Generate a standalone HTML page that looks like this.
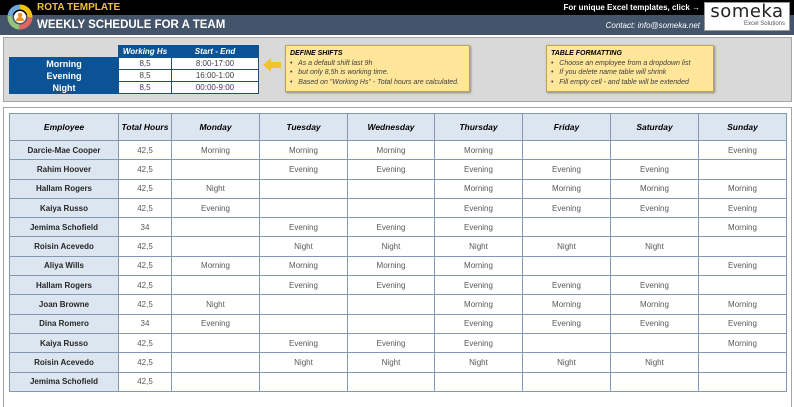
<!DOCTYPE html>
<html><head><meta charset="utf-8"><style>
*{margin:0;padding:0;box-sizing:border-box}
body{width:794px;height:407px;overflow:hidden;background:#fff;font-family:"Liberation Sans",Arial,sans-serif;position:relative}
.abs{position:absolute}
#top1{left:0;top:0;width:794px;height:15px;background:#000}
#top2{left:0;top:15px;width:794px;height:20px;background:#44546a}
#panel{left:3px;top:37px;width:789px;height:65px;background:#d9d9d9;border:1px solid #a6a6a6}
#tpanel{left:3px;top:107px;width:789px;height:300px;background:#fff;border:1px solid #a6a6a6;border-bottom:none}
table{border-collapse:collapse;table-layout:fixed}
#shift{left:9px;top:45px;font-size:8px}
#shift td{height:12px;text-align:center;border:1px solid #1f4e79;color:#404040;background:#fff}
#shift td.l{background:#0b5394;color:#fff;font-weight:bold;font-size:9px;border-color:#0b5394}
#shift td.h{background:#0b5394;color:#fff;font-weight:bold;font-style:italic;border-color:#0b5394}
.note{background:#ffe699;border:1px solid #bfa54f;box-shadow:1px 1px 2px #888;font-size:7px;font-style:italic;color:#404040;padding:3px 4px;line-height:9.6px}
.note b{color:#000;display:block}
#main{left:9px;top:113px;font-size:8px}
#main td{border:1px solid #8497b0;text-align:center;color:#595959;height:19.3px}
#main tr.hd td{height:27px;background:#dce6f1;font-weight:bold;font-style:italic;color:#000;font-size:8.5px}
#main td.n{background:#dce6f1;font-weight:bold;color:#262626}
</style></head><body>
<div id="top1" class="abs"></div>
<div id="top2" class="abs"></div>
<svg class="abs" style="left:6px;top:3px" width="28" height="28" viewBox="0 0 28 28">
<circle cx="14" cy="14" r="10" fill="none" stroke="#f4c20d" stroke-width="5" stroke-dasharray="16 63" transform="rotate(-90 14 14)"/>
<circle cx="14" cy="14" r="10" fill="none" stroke="#e06666" stroke-width="5" stroke-dasharray="16 63" stroke-dashoffset="-16" transform="rotate(-90 14 14)"/>
<circle cx="14" cy="14" r="10" fill="none" stroke="#93c47d" stroke-width="5" stroke-dasharray="16 63" stroke-dashoffset="-32" transform="rotate(-90 14 14)"/>
<circle cx="14" cy="14" r="10" fill="none" stroke="#6fa8dc" stroke-width="5" stroke-dasharray="15 63" stroke-dashoffset="-48" transform="rotate(-90 14 14)"/>
<circle cx="14" cy="14" r="6" fill="#fff"/>
<circle cx="14" cy="12" r="2.3" fill="#e69138"/><path d="M10 18a4 4 0 0 1 8 0z" fill="#e69138"/>
</svg>
<div class="abs" style="left:37px;top:2px;color:#f1c232;font-weight:bold;font-size:10px">ROTA TEMPLATE</div>
<div class="abs" style="left:37px;top:19px;color:#fff;font-weight:bold;font-size:11.5px">WEEKLY SCHEDULE FOR A TEAM</div>
<div class="abs" style="left:560px;top:3px;width:140px;text-align:right;color:#fff;font-weight:bold;font-size:8px">For unique Excel templates, click →</div>
<div class="abs" style="left:560px;top:21px;width:140px;text-align:right;color:#fff;font-style:italic;font-size:8px">Contact: info@someka.net</div>
<div class="abs" style="left:704px;top:2px;width:86px;height:29px;background:#fff;border:1px solid #999">
<div style="text-align:center;font-size:18px;line-height:18px;color:#222;letter-spacing:.5px;font-family:'DejaVu Sans',sans-serif">someka</div>
<div style="text-align:right;padding-right:4px;font-size:6px;color:#555">Excel Solutions</div></div>
<div id="panel" class="abs"></div>
<table id="shift" class="abs">
<colgroup><col style="width:109px"><col style="width:53px"><col style="width:87px"></colgroup>
<tr><td style="border:none;background:transparent"></td><td class="h">Working Hs</td><td class="h">Start - End</td></tr>
<tr><td class="l">Morning</td><td>8,5</td><td>8:00-17:00</td></tr>
<tr><td class="l">Evening</td><td>8,5</td><td>16:00-1:00</td></tr>
<tr><td class="l">Night</td><td>8,5</td><td>00:00-9:00</td></tr>
</table>
<svg class="abs" style="left:263px;top:58px" width="18" height="14"><path d="M0 7 L8 0 L8 4 L18 4 L18 10 L8 10 L8 14Z" fill="#f1c232"/></svg>
<div class="abs note" style="left:285px;top:45px;width:185px;height:47px"><b>DEFINE SHIFTS</b>•&nbsp;&nbsp; As a default shift last 9h<br>•&nbsp;&nbsp; but only 8,5h is working time.<br>•&nbsp;&nbsp; Based on "Working Hs" - Total hours are calculated.</div>
<div class="abs note" style="left:546px;top:45px;width:168px;height:47px"><b>TABLE FORMATTING</b>•&nbsp;&nbsp; Choose an employee from a dropdown list<br>•&nbsp;&nbsp; If you delete name table will shrink<br>•&nbsp;&nbsp; Fill empty cell - and table will be extended</div>
<div id="tpanel" class="abs"></div>
<table id="main" class="abs">
<colgroup><col style="width:109px"><col style="width:53px"><col style="width:88px"><col style="width:88px"><col style="width:87px"><col style="width:88px"><col style="width:88px"><col style="width:88px"><col style="width:88px"></colgroup>
<tr class="hd"><td>Employee</td><td>Total Hours</td><td>Monday</td><td>Tuesday</td><td>Wednesday</td><td>Thursday</td><td>Friday</td><td>Saturday</td><td>Sunday</td></tr>
<tr><td class="n">Darcie-Mae Cooper</td><td>42,5</td><td>Morning</td><td>Morning</td><td>Morning</td><td>Morning</td><td></td><td></td><td>Evening</td></tr>
<tr><td class="n">Rahim Hoover</td><td>42,5</td><td></td><td>Evening</td><td>Evening</td><td>Evening</td><td>Evening</td><td>Evening</td><td></td></tr>
<tr><td class="n">Hallam Rogers</td><td>42,5</td><td>Night</td><td></td><td></td><td>Morning</td><td>Morning</td><td>Morning</td><td>Morning</td></tr>
<tr><td class="n">Kaiya Russo</td><td>42,5</td><td>Evening</td><td></td><td></td><td>Evening</td><td>Evening</td><td>Evening</td><td>Evening</td></tr>
<tr><td class="n">Jemima Schofield</td><td>34</td><td></td><td>Evening</td><td>Evening</td><td>Evening</td><td></td><td></td><td>Morning</td></tr>
<tr><td class="n">Roisin Acevedo</td><td>42,5</td><td></td><td>Night</td><td>Night</td><td>Night</td><td>Night</td><td>Night</td><td></td></tr>
<tr><td class="n">Aliya Wills</td><td>42,5</td><td>Morning</td><td>Morning</td><td>Morning</td><td>Morning</td><td></td><td></td><td>Evening</td></tr>
<tr><td class="n">Hallam Rogers</td><td>42,5</td><td></td><td>Evening</td><td>Evening</td><td>Evening</td><td>Evening</td><td>Evening</td><td></td></tr>
<tr><td class="n">Joan Browne</td><td>42,5</td><td>Night</td><td></td><td></td><td>Morning</td><td>Morning</td><td>Morning</td><td>Morning</td></tr>
<tr><td class="n">Dina Romero</td><td>34</td><td>Evening</td><td></td><td></td><td>Evening</td><td>Evening</td><td>Evening</td><td>Evening</td></tr>
<tr><td class="n">Kaiya Russo</td><td>42,5</td><td></td><td>Evening</td><td>Evening</td><td>Evening</td><td></td><td></td><td>Morning</td></tr>
<tr><td class="n">Roisin Acevedo</td><td>42,5</td><td></td><td>Night</td><td>Night</td><td>Night</td><td>Night</td><td>Night</td><td></td></tr>
<tr><td class="n">Jemima Schofield</td><td>42,5</td><td></td><td></td><td></td><td></td><td></td><td></td><td></td></tr>
</table>
</body></html>
